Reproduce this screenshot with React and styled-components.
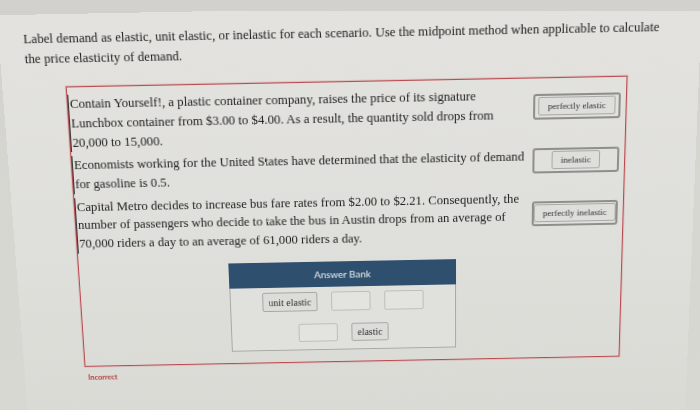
import React from "react";
import styled, { createGlobalStyle } from "styled-components";

const scenarios = [
  [
    "Contain Yourself!, a plastic container company, raises the price of its signature",
    "Lunchbox container from $3.00 to $4.00. As a result, the quantity sold drops from",
    "20,000 to 15,000.",
  ],
  [
    "Economists working for the United States have determined that the elasticity of demand",
    "for gasoline is 0.5.",
  ],
  [
    "Capital Metro decides to increase bus fare rates from $2.00 to $2.21. Consequently, the",
    "number of passengers who decide to take the bus in Austin drops from an average of",
    "70,000 riders a day to an average of 61,000 riders a day.",
  ],
];

const targets = ["perfectly elastic", "inelastic", "perfectly inelastic"];

const bank = ["unit elastic", null, null, null, "elastic"];

const App = () => {
  return (
    <Screen>
      <GlobalStyle />
      <TopBand />
      <Page>
        <Prompt>
          Label demand as elastic, unit elastic, or inelastic for each scenario. Use the midpoint method when applicable to calculate
          <br />
          the price elasticity of demand.
        </Prompt>
        <Question>
          <TopRow>
            <Scenarios>
              {scenarios.map((lines, i) => (
                <Scenario key={i}>
                  {lines.map((line, j) => (
                    <React.Fragment key={j}>
                      {j > 0 && <br />}
                      {line}
                    </React.Fragment>
                  ))}
                </Scenario>
              ))}
            </Scenarios>
            <Targets>
              {targets.map((label) => (
                <DropZone key={label}>
                  <Chip>{label}</Chip>
                </DropZone>
              ))}
            </Targets>
          </TopRow>
          <Bank>
            <BankHeader>Answer Bank</BankHeader>
            <BankBody>
              {bank.map((label, i) =>
                label ? <BankChip key={i}>{label}</BankChip> : <EmptySlot key={i} />
              )}
            </BankBody>
          </Bank>
        </Question>
        <Status>Incorrect</Status>
      </Page>
    </Screen>
  );
};

const GlobalStyle = createGlobalStyle`
  html, body {
    margin: 0;
    padding: 0;
  }
  body {
    background: #d6d6d1;
    overflow: hidden;
  }
`;

const Screen = styled.div`
  width: 700px;
  height: 410px;
  overflow: hidden;
  background: linear-gradient(180deg, #d1d0cc 0%, #d6d6d1 40%, #d8d8d3 100%);
`;

// strip of the screen above the page; sits over the tilted page edge
const TopBand = styled.div`
  position: relative;
  z-index: 1;
  height: 11px;
  background: #d2d1cd;
`;

// the photo is slightly turned and tilted, so the page is drawn flat and then skewed
const Page = styled.main`
  box-sizing: border-box;
  width: 682px;
  height: 440px;
  margin: 3px 0 0 12px;
  padding: 13.7px 0 0 24px;
  background: linear-gradient(180deg, #e3e2de 0%, #dfdfdb 50%, #d9d9d4 100%);
  transform-origin: 338px 191px;
  transform: rotate(-1.1deg) perspective(600px) rotateX(-6deg);
  font-family: "Liberation Serif", "Times New Roman", serif;
  color: #222;
`;

const Prompt = styled.p`
  margin: 0;
  font-size: 12.7px;
  line-height: 19px;
  white-space: nowrap;
`;

const Question = styled.section`
  box-sizing: border-box;
  width: 550px;
  margin: 17.5px 0 0 38px;
  padding: 7px 5px 12px 0;
  border: 1px solid #b94a4f;
  box-shadow: 0 0 0 1px rgba(205, 125, 125, 0.3);
`;

const TopRow = styled.div`
  display: flex;
  justify-content: space-between;
  align-items: flex-start;
`;

const Scenarios = styled.div`
  display: flex;
  flex-direction: column;
  gap: 4px;
`;

const Scenario = styled.p`
  margin: 0;
  padding-left: 1px;
  border-left: 1px solid #3a3a3a;
  font-size: 12.7px;
  line-height: 18.7px;
  white-space: nowrap;
`;

const Targets = styled.div`
  display: flex;
  flex-direction: column;
  gap: 28px;
  padding-top: 7.8px;
`;

const DropZone = styled.div`
  box-sizing: border-box;
  width: 86px;
  height: 25px;
  border: 2px solid #8e8e8b;
  border-radius: 3px;
  display: flex;
  align-items: center;
  justify-content: center;
`;

const Chip = styled.span`
  box-sizing: border-box;
  height: 18px;
  padding: 0 8px;
  border: 1px solid #a9a9a6;
  border-radius: 2px;
  background: #dededb;
  display: inline-flex;
  align-items: center;
  font-size: 9px;
  color: #333;
  white-space: nowrap;
`;

const Bank = styled.div`
  box-sizing: border-box;
  width: 230px;
  margin: 13px 0 0 151px;
  border: 1px solid #a7a7a4;
  background: #e0e0dc;
`;

const BankHeader = styled.div`
  height: 26px;
  margin: -1px -1px 0;
  background: #2e4f6d;
  color: #eef2f5;
  font-family: Lato, "Open Sans", sans-serif;
  font-size: 10px;
  display: flex;
  align-items: center;
  justify-content: center;
`;

const BankBody = styled.div`
  display: flex;
  flex-wrap: wrap;
  justify-content: center;
  gap: 13px 14px;
  padding: 5.5px 12px 7.5px;
`;

const BankChip = styled.span`
  box-sizing: border-box;
  height: 19.5px;
  padding: 0 5.5px;
  border: 1px solid #a6a6a3;
  border-radius: 2px;
  background: #dcdcd9;
  display: inline-flex;
  align-items: center;
  font-size: 10px;
  color: #2e2e2e;
  white-space: nowrap;
`;

const EmptySlot = styled.span`
  box-sizing: border-box;
  width: 40px;
  height: 19.5px;
  border: 1px solid #bcbcb8;
  border-radius: 2px;
  background: #e3e3df;
`;

const Status = styled.div`
  margin: 7.5px 0 0 41px;
  font-family: Lato, "Open Sans", sans-serif;
  font-size: 7.5px;
  line-height: 10px;
  font-weight: 700;
  color: #b23b3f;
`;

export default App;
